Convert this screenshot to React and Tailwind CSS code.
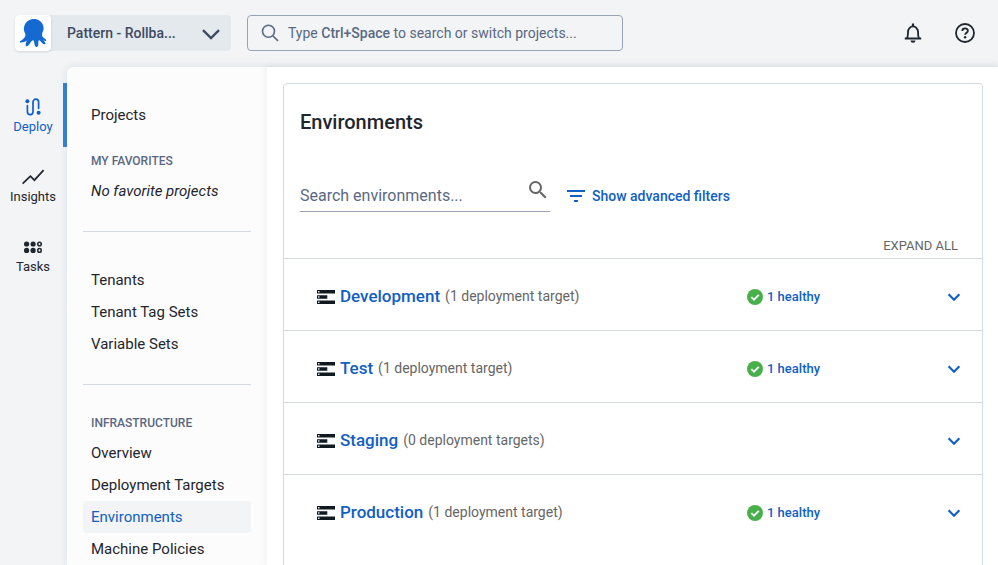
import { useState } from 'react'
import clsx from 'clsx'
import { SiOctopusdeploy } from 'react-icons/si'
import { MdSearch, MdFilterList } from 'react-icons/md'

function DeployIcon() {
  return (
    <svg className="h-5 w-5" viewBox="0 0 20 20" fill="none" stroke="currentColor" strokeWidth="1.7" strokeLinecap="round">
      <circle cx="4.4" cy="4.2" r="2" fill="currentColor" stroke="none" />
      <circle cx="15.6" cy="15.7" r="2" fill="currentColor" stroke="none" />
      <path d="M4.4 8.5V14.8a2.8 2.8 0 0 0 5.6 0V5a2.8 2.8 0 0 1 5.6 0v6.3" />
    </svg>
  )
}

function InsightsIcon() {
  return (
    <svg className="h-6 w-6" viewBox="0 0 24 24" fill="none" stroke="currentColor" strokeWidth="1.7">
      <path d="M1.6 18.6 9.4 11.2 13.4 15.2 22.6 5.2" />
    </svg>
  )
}

function TasksIcon() {
  return (
    <svg className="h-5 w-5" viewBox="0 0 20 20" fill="currentColor">
      <circle cx="3.6" cy="7" r="2.6" />
      <circle cx="10.1" cy="7" r="2.6" />
      <circle cx="3.6" cy="13.4" r="2.6" />
      <circle cx="10.1" cy="13.4" r="2.6" />
      <circle cx="16.5" cy="7" r="1.8" fill="none" stroke="currentColor" strokeWidth="1.5" />
      <circle cx="16.5" cy="13.4" r="1.8" fill="none" stroke="currentColor" strokeWidth="1.5" />
    </svg>
  )
}

function BellIcon() {
  return (
    <svg className="h-6 w-6" viewBox="0 0 24 24" fill="none" stroke="currentColor" strokeWidth="1.8">
      <path d="M3.8 17.5h16.4M6 17.4c1-2 1-4 1-6.4a5 5.6 0 0 1 10 0c0 2.4 0 4.4 1 6.4" strokeLinejoin="round" />
      <path d="M12 2.5v2.5" strokeWidth="2.2" />
      <path d="M9.5 19.5h5a2.5 2.2 0 0 1-5 0z" fill="currentColor" stroke="none" />
    </svg>
  )
}

function HelpIcon() {
  return (
    <svg className="h-6 w-6" viewBox="0 0 24 24" fill="none" stroke="currentColor" strokeWidth="1.8">
      <circle cx="12" cy="12" r="9" />
      <path d="M9.3 9.9c0-3.2 5.6-3.2 5.6-.2 0 2-2.7 2-2.7 4.1" />
      <circle cx="12.1" cy="16.3" r="1.2" fill="currentColor" stroke="none" />
    </svg>
  )
}

function ChevronIcon() {
  return (
    <svg className="h-6 w-6" viewBox="0 0 24 24" fill="none" stroke="currentColor" strokeWidth="2.2">
      <path d="M6.6 9.3 12 14.7l5.4-5.4" />
    </svg>
  )
}

function WideChevronIcon() {
  return (
    <svg className="h-6 w-6 shrink-0" viewBox="0 0 24 24" fill="none" stroke="currentColor" strokeWidth="2.4">
      <path d="M4 9.2 12 17l8-7.8" />
    </svg>
  )
}

function ServerIcon() {
  return (
    <svg className="h-[14px] w-[18px] shrink-0" viewBox="0 0 18 14">
      <path d="M0 0h18v3.5H0zM0 5.300h10.300v3.5H0zM0 10.500h18V14H0z" fill="#111a23" />
      <path d="M1 1h1.500v1.500H1zM1 6.300h1.500v1.500H1zM1 11.500h1.500V13H1z" fill="#d5d9de" />
    </svg>
  )
}

function HealthyIcon() {
  return (
    <svg className="h-4 w-4 shrink-0" viewBox="0 0 16 16" fill="none">
      <circle cx="8" cy="8" r="8" fill="#48b04b" />
      <path d="M4.3 8.2 7 10.7l4.800-4.900" stroke="#fff" strokeWidth="1.7" />
    </svg>
  )
}

const railItems = [
  { label: 'Deploy', icon: DeployIcon, active: true },
  { label: 'Insights', icon: InsightsIcon },
  { label: 'Tasks', icon: TasksIcon },
]

const environments = [
  { name: 'Development', targets: 1 },
  { name: 'Test', targets: 1 },
  { name: 'Staging', targets: 0 },
  { name: 'Production', targets: 1 },
]

function NavItem({ label, active }) {
  return (
    <a
      href="#"
      className={clsx(
        'block rounded px-2 text-[15px] leading-8',
        active ? 'bg-[#f2f4f6] text-[#1160c2]' : 'text-[#1f262e]'
      )}
    >
      {label}
    </a>
  )
}

function NavHeading({ children }) {
  return <h2 className="px-2 text-[12px] font-medium leading-7 text-[#5a6882]">{children}</h2>
}

function EnvironmentRow({ name, targets }) {
  return (
    <li className="grid h-[72px] grid-cols-[2fr_1fr] items-center border-t border-[#d5d9e2] px-4 pt-1">
      <div className="flex items-center gap-[5px] pl-[17px]">
        <ServerIcon />
        <a href="#" className="text-[17px] font-medium text-[#1160c2]">{name}</a>
        <span className="text-[14px] text-[#666]">({targets} deployment {targets === 1 ? 'target' : 'targets'})</span>
      </div>
      <div className="flex items-center pl-[3px]">
        {targets > 0 && (
          <a href="#" className="flex items-center gap-1 text-[13px] font-medium text-[#1160c2]">
            <HealthyIcon />
            {targets} healthy
          </a>
        )}
        <button aria-label={`Expand ${name}`} className="ml-auto text-[#1160c2]">
          <ChevronIcon />
        </button>
      </div>
    </li>
  )
}

export default function App() {
  const [query, setQuery] = useState('')
  const shown = environments.filter(e => e.name.toLowerCase().includes(query.toLowerCase()))

  return (
    <div className="flex h-screen flex-col overflow-hidden bg-[#f2f4f6] font-['Roboto',sans-serif] text-[#1f262e]">

      {/* Top bar */}
      <header className="flex shrink-0 items-center px-[15px] pt-[15px] pb-4">
        <button className="flex h-9 w-[216px] items-center rounded bg-[#e4e9ee] pr-2 text-[#3f4b62]">
          <span className="flex h-9 w-9 items-center justify-center rounded bg-white text-[#146ad0] shadow-sm">
            <SiOctopusdeploy className="h-7 w-7" />
          </span>
          <span className="ml-4 min-w-0 flex-1 truncate text-left text-[14px] font-medium">Pattern - Rollba...</span>
          <WideChevronIcon />
        </button>
        <button className="ml-4 flex h-9 w-[376px] items-center gap-2 rounded border border-[#98a4b6] px-3 text-[14px] text-[#5a6882]">
          <svg className="h-5 w-5" viewBox="0 0 20 20" fill="none" stroke="currentColor" strokeWidth="1.6">
            <circle cx="8.5" cy="8.3" r="6" />
            <path d="m12.8 12.7 5.2 5.2" />
          </svg>
          <span>Type <b className="font-medium">Ctrl+Space</b> to search or switch projects...</span>
        </button>
        <div className="ml-auto flex gap-7 pr-[6px]">
          <button aria-label="Notifications"><BellIcon /></button>
          <button aria-label="Help"><HelpIcon /></button>
        </div>
      </header>

      <div className="flex min-h-0 flex-1">

        {/* Icon rail */}
        <nav aria-label="Primary" className="flex w-[67px] shrink-0 flex-col gap-[6px] pt-4">
          {railItems.map(({ label, icon: Icon, active }) => (
            <a
              key={label}
              href="#"
              className={clsx(
                'flex h-16 flex-col items-center justify-center border-r-4 pl-[3px] text-[13px] leading-4',
                active ? 'border-[#3481d8] text-[#1160c2]' : 'border-transparent'
              )}
            >
              <span className="flex h-6 items-center"><Icon /></span>
              {label}
            </a>
          ))}
        </nav>

        <div className="flex min-w-0 flex-1 rounded-tl-md bg-[#fcfcfc] shadow-[0_0_8px_rgba(30,40,70,0.1)]">

          {/* Section menu */}
          <nav aria-label="Deploy" className="w-[200px] shrink-0 overflow-y-auto px-4 pt-8 [scrollbar-width:none]">
            <NavItem label="Projects" />
            <div className="mt-4 mb-6 border-b border-[#d5d9e2] pb-6">
              <NavHeading>MY FAVORITES</NavHeading>
              <p className="px-2 text-[15px] italic leading-8">No favorite projects</p>
            </div>
            <div className="mt-8 mb-6 border-b border-[#d5d9e2] pb-6">
              <NavItem label="Tenants" />
              <NavItem label="Tenant Tag Sets" />
              <NavItem label="Variable Sets" />
            </div>
            <NavHeading>INFRASTRUCTURE</NavHeading>
            <NavItem label="Overview" />
            <NavItem label="Deployment Targets" />
            <NavItem label="Environments" active />
            <NavItem label="Machine Policies" />
          </nav>

          {/* Environments */}
          <main className="min-w-0 flex-1 overflow-y-auto bg-white px-4 pt-4 pr-[15px] shadow-[0_0_8px_rgba(30,40,70,0.08)] [scrollbar-width:none]">
            <section className="rounded border border-[#d5d9e2] pb-10">
              <h1 className="px-4 pt-6 text-[20px] font-medium leading-7">Environments</h1>
              <div className="mt-9 flex items-center gap-[14px] px-4">
                <div className="flex h-10 w-[250px] items-center border-b border-[#98a4b6] pb-1">
                  <input
                    type="text"
                    aria-label="Search environments"
                    placeholder="Search environments..."
                    value={query}
                    onChange={e => setQuery(e.target.value)}
                    className="h-full min-w-0 flex-1 pt-3 text-[16px] outline-none placeholder:text-[#5a6882]"
                  />
                  <MdSearch className="h-6 w-6 text-[#666]" />
                </div>
                <button className="flex items-center gap-1 pt-2 text-[14px] font-medium text-[#1160c2]">
                  <MdFilterList className="h-6 w-6" />
                  Show advanced filters
                </button>
              </div>
              <div className="flex justify-end px-6 pt-[22px]">
                <button className="text-[13px] leading-6 text-[#666]">EXPAND ALL</button>
              </div>
              <ul>
                {shown.map(env => <EnvironmentRow key={env.name} {...env} />)}
              </ul>
            </section>
          </main>
        </div>
      </div>
    </div>
  )
}
